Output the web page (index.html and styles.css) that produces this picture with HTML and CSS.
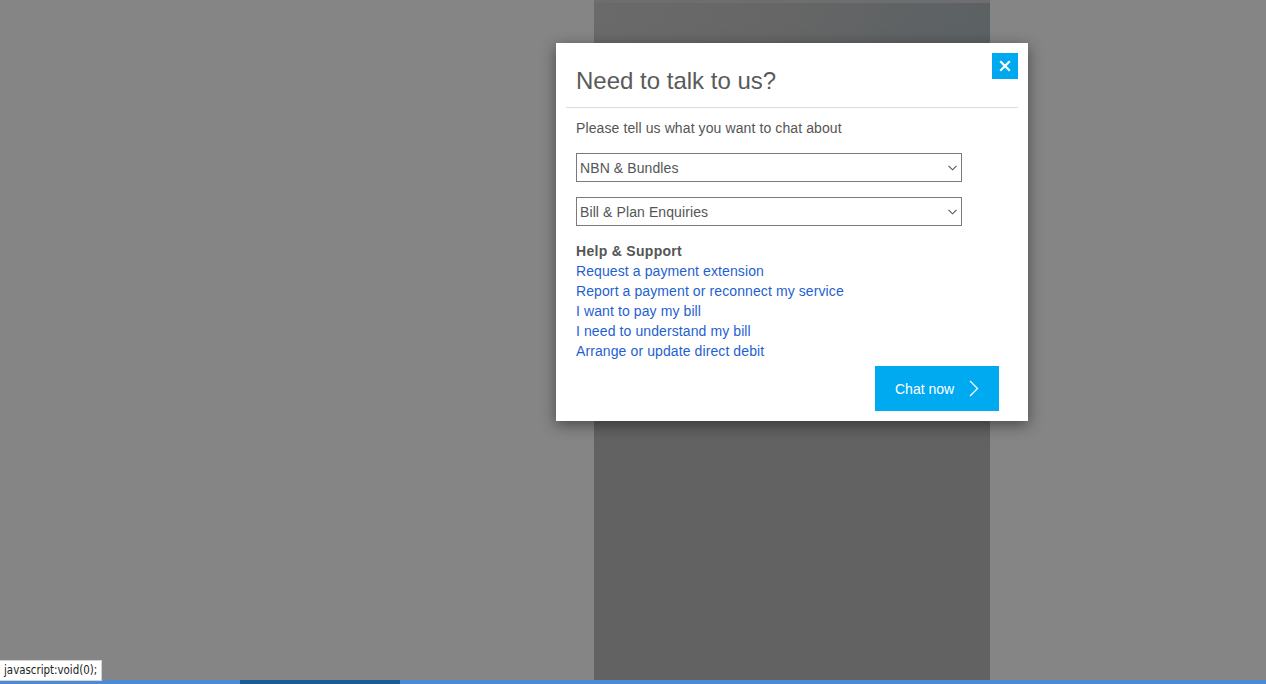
FILE: index.html
```html
<!DOCTYPE html>
<html lang="en">
<head>
<meta charset="UTF-8">
<title>Need to talk to us?</title>
<link rel="stylesheet" href="styles.css">
</head>
<body>
  <div class="stage">
    <div class="page-column">
      <div class="hero"></div>
    </div>
  </div>
  <div class="taskbar">
    <span class="task task-active"></span>
  </div>

  <div class="status-bar">javascript:void(0);</div>

  <div class="chat-modal">
    <button class="close-btn" aria-label="Close">
      <svg width="12" height="12" viewBox="0 0 12 12"><path d="M2 2 L10 10 M10 2 L2 10" stroke="#fff" stroke-width="2.2" stroke-linecap="square"/></svg>
    </button>
    <div class="modal-header">
      <h1>Need to talk to us?</h1>
    </div>
    <div class="modal-body">
      <p class="intro">Please tell us what you want to chat about</p>

      <div class="select-wrap">
        <select class="topic">
          <option>NBN &amp; Bundles</option>
        </select>
        <svg class="chev" width="9" height="6" viewBox="0 0 9 6"><path d="M0.5 0.8 L4.5 4.8 L8.5 0.8" fill="none" stroke="#555" stroke-width="1.1"/></svg>
      </div>

      <div class="select-wrap">
        <select class="topic">
          <option>Bill &amp; Plan Enquiries</option>
        </select>
        <svg class="chev" width="9" height="6" viewBox="0 0 9 6"><path d="M0.5 0.8 L4.5 4.8 L8.5 0.8" fill="none" stroke="#555" stroke-width="1.1"/></svg>
      </div>

      <div class="help">
        <h2>Help &amp; Support</h2>
        <a href="#">Request a payment extension</a>
        <a href="#">Report a payment or reconnect my service</a>
        <a href="#">I want to pay my bill</a>
        <a href="#">I need to understand my bill</a>
        <a href="#">Arrange or update direct debit</a>
      </div>

      <div class="actions">
        <button class="chat-btn">Chat now
          <svg width="10" height="17" viewBox="0 0 10 17"><path d="M1 1 L8.5 8.5 L1 16" fill="none" stroke="#fff" stroke-width="1.3"/></svg>
        </button>
      </div>
    </div>
  </div>
</body>
</html>
```

FILE: styles.css
```css
body {
  margin: 0;
  height: 684px;
  overflow: hidden;
  display: flex;
  flex-direction: column;
  background-color: #858585;
  font-family: "Liberation Sans", Arial, sans-serif;
}

.stage {
  flex: 1;
  padding-left: 594px;
  display: flex;
}

.page-column {
  width: 396px;
  background-color: #626262;
}

.hero {
  height: 130px;
  border-top: 3px solid #6e6e6e;
  background: linear-gradient(100deg, #6a6a6a 0%, #666666 45%, #5e6264 80%, #5b6163 100%);
}

.taskbar {
  height: 4px;
  background-color: #4c8ad4;
  display: flex;
  padding-left: 240px;
}

.task {
  width: 160px;
}

.task-active {
  background-color: #1c5c94;
}

.status-bar {
  position: absolute;
  left: 0;
  top: 660px;
  height: 21px;
  padding: 0 4px;
  box-sizing: border-box;
  width: 102px;
  background-color: #fff;
  border: 1px solid #d4d4d4;
  border-left: none;
  font-family: "DejaVu Sans Condensed", "Liberation Sans", sans-serif;
  font-size: 11.4px;
  line-height: 19px;
  color: #222;
  white-space: nowrap;
}

.chat-modal {
  position: absolute;
  left: 556px;
  top: 43px;
  width: 472px;
  height: 378px;
  background-color: #fff;
  box-shadow: 0 4px 14px rgba(0, 0, 0, 0.45);
}

.close-btn {
  position: absolute;
  top: 10px;
  right: 10px;
  width: 26px;
  height: 26px;
  padding: 0;
  border: none;
  background-color: #00a8f0;
  display: flex;
  align-items: center;
  justify-content: center;
  cursor: pointer;
}

.modal-header {
  margin: 0 10px;
  padding: 24px 10px 12px;
  border-bottom: 1px solid #dcdcdc;
}

.modal-header h1 {
  margin: 0;
  font-size: 24px;
  line-height: 28px;
  font-weight: normal;
  color: #5a5a5a;
}

.modal-body {
  padding: 10px 20px 0;
  letter-spacing: 0.1px;
}

.intro {
  margin: 0 0 15px;
  font-size: 14px;
  line-height: 20px;
  color: #555;
}

.select-wrap {
  position: relative;
  width: 386px;
  margin-bottom: 15px;
}

.topic {
  appearance: none;
  -webkit-appearance: none;
  display: block;
  width: 100%;
  height: 29px;
  margin: 0;
  padding: 0 3px;
  border: 1px solid #7a7a7a;
  border-radius: 0;
  background-color: #fff;
  font-family: "Liberation Sans", Arial, sans-serif;
  font-size: 14px;
  letter-spacing: 0.1px;
  color: #555;
}

.chev {
  position: absolute;
  right: 5px;
  top: 12px;
}

.help h2 {
  margin: 0;
  font-size: 14px;
  line-height: 20px;
  font-weight: bold;
  letter-spacing: 0.3px;
  color: #555;
}

.help a {
  display: block;
  font-size: 14px;
  line-height: 20px;
  color: #1f5fd2;
  text-decoration: none;
}

.actions {
  display: flex;
  justify-content: flex-end;
  margin-top: 5px;
  padding-right: 9px;
}

.chat-btn {
  width: 124px;
  height: 45px;
  padding: 0 0 0 20px;
  border: none;
  background-color: #00aaf0;
  color: #fff;
  font-family: "Liberation Sans", Arial, sans-serif;
  font-size: 14px;
  display: flex;
  align-items: center;
  gap: 15px;
  cursor: pointer;
}
```
